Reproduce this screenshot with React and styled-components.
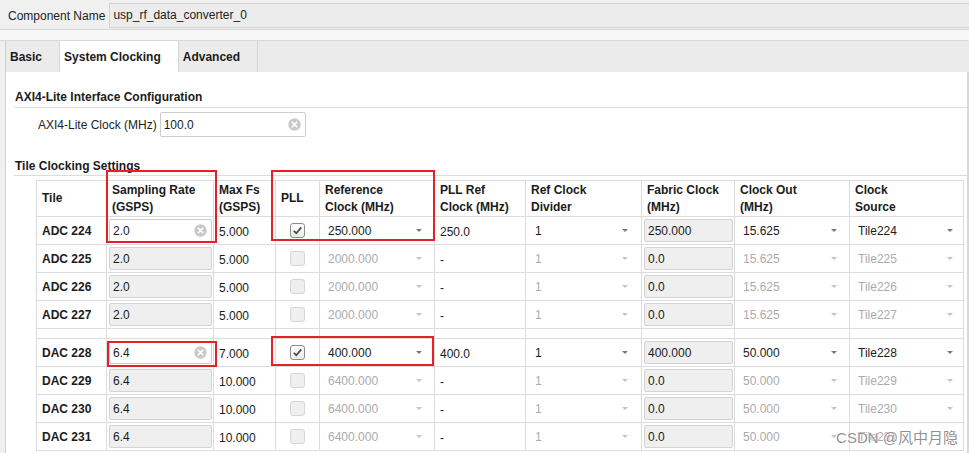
import React from 'react';
import styled, { createGlobalStyle } from 'styled-components';

const GlobalStyle = createGlobalStyle`
  body {
    margin: 0;
    background: #f0f0f0;
    font-family: "Liberation Sans", Arial, sans-serif;
    font-size: 12px;
    color: #1b1b1b;
  }
`;

const Page = styled.div`
  position: relative;
  width: 969px;
  height: 453px;
  overflow: hidden;
  background: #f0f0f0;
`;

const NameRow = styled.div`
  display: flex;
  align-items: center;
  box-sizing: border-box;
  height: 30px;
  padding-top: 3px;
  padding-bottom: 1px;
  border-bottom: 1px solid #d6d6d6;
`;

const NameLabel = styled.span`
  padding: 0 4px 0 8px;
  color: #222;
`;

const NameInput = styled.div`
  flex: 1;
  box-sizing: border-box;
  height: 25px;
  line-height: 23px;
  padding-left: 3px;
  background: #ececec;
  border: 1px solid #d2d2d2;
  border-right: none;
  color: #222;
`;

const Strip = styled.div`
  height: 10px;
  background: #f7f7f7;
  border-bottom: 1px solid #d8d8d8;
`;

const Panel = styled.div`
  margin-left: 5px;
  border-left: 1px solid #cfcfcf;
`;

const TabBar = styled.div`
  display: flex;
  height: 31px;
  background: #ebebeb;
`;

const Tab = styled.div`
  display: flex;
  align-items: center;
  padding: 0 17px 0 4px;
  font-weight: bold;
  color: #1b1b1b;
  border-right: 1px solid #d4d4d4;
  background: ${p => (p.$active ? '#ffffff' : 'transparent')};
`;

const Content = styled.div`
  height: 381px;
  background: #fff;
  border-right: 2px solid #d9d9d9;
  padding-left: 8px;
`;

const Heading = styled.div`
  padding: ${p => p.$top}px 0 ${p => p.$bottom}px 1px;
  line-height: 14px;
  font-weight: bold;
  color: #1b1b1b;
  border-bottom: 1px solid #dcdcdc;
`;

const FieldRow = styled.div`
  display: flex;
  align-items: center;
  margin-top: 4px;
  padding-left: 24px;
  gap: 3px;
`;

const FieldLabel = styled.span`
  color: #222;
`;

const TextBox = styled.div`
  display: flex;
  align-items: center;
  justify-content: space-between;
  box-sizing: border-box;
  width: ${p => p.$w}px;
  height: ${p => p.$h}px;
  padding: 0 4px 0 3px;
  border: 1px solid ${p => (p.$disabled ? '#d3d3d3' : '#cdcdcd')};
  border-radius: 2px;
  background: ${p => (p.$disabled ? '#efefef' : '#fff')};
  color: #1b1b1b;
`;

const Table = styled.table`
  margin: 4px 0 0 22px;
  border-collapse: collapse;
  table-layout: fixed;
  width: 927px;
`;

const Th = styled.th`
  height: 35px;
  padding: 0 5px;
  text-align: left;
  vertical-align: middle;
  font-weight: bold;
  line-height: 17px;
  color: #1b1b1b;
  border: 1px solid #dcdcdc;
`;

const Row = styled.tr`
  height: ${p => (p.$spacer ? 10 : 28)}px;
`;

const Td = styled.td`
  padding: 0 ${p => p.$pad ?? 5}px;
  vertical-align: middle;
  border: 1px solid #dcdcdc;
  color: #1b1b1b;
  font-weight: ${p => (p.$bold ? 'bold' : 'normal')};
`;

const Plain = styled.div`
  padding-top: 3px;
`;

const CheckBox = styled.div`
  display: flex;
  align-items: center;
  justify-content: center;
  box-sizing: border-box;
  width: 15px;
  height: 15px;
  margin: 0 auto;
  border-radius: 3px;
  border: 1px solid ${p => (p.$checked ? '#8c8c8c' : '#d6d6d6')};
  background: ${p => (p.$checked ? 'linear-gradient(#ffffff, #ececec)' : '#efefef')};
`;

const Select = styled.div`
  display: flex;
  align-items: center;
  justify-content: space-between;
  padding: 0 ${p => p.$right}px 0 ${p => p.$left}px;
  color: ${p => (p.$disabled ? '#ababab' : '#1b1b1b')};
`;

const Caret = styled.span`
  width: 0;
  height: 0;
  border-left: 3px solid transparent;
  border-right: 3px solid transparent;
  border-top: 3px solid ${p => (p.$disabled ? '#c4c4c4' : '#7a7a7a')};
`;

const Mark = styled.div`
  position: absolute;
  left: ${p => p.$x}px;
  top: ${p => p.$y}px;
  width: ${p => p.$w}px;
  height: ${p => p.$h}px;
  box-sizing: border-box;
  border: 2px solid #e5202b;
  pointer-events: none;
`;

const Watermark = styled.div`
  position: absolute;
  right: 11px;
  bottom: 6px;
  font-family: "Liberation Sans", "Noto Sans CJK SC", sans-serif;
  font-size: 15px;
  color: rgba(110, 110, 110, 0.75);
  text-shadow: 0 0 2px #fff, 0 0 1px #fff;
`;

const ClearIcon = () => (
  <svg width="13" height="13" viewBox="0 0 13 13">
    <circle cx="6.5" cy="6.5" r="6.2" fill="#c9c9c9" />
    <path d="M4.2 4.2 L8.8 8.8 M8.8 4.2 L4.2 8.8" stroke="#fff" strokeWidth="1.6" strokeLinecap="round" />
  </svg>
);

const CheckIcon = () => (
  <svg width="11" height="11" viewBox="0 0 11 11">
    <path d="M1.8 5.8 L4.3 8.2 L9.3 2.4" fill="none" stroke="#4a4a4a" strokeWidth="1.7" />
  </svg>
);

const tiles = [
  { name: 'ADC 224', rate: '2.0', max: '5.000', ref: '250.000', pllRef: '250.0', fabric: '250.000', out: '15.625', src: 'Tile224', on: true },
  { name: 'ADC 225', rate: '2.0', max: '5.000', ref: '2000.000', pllRef: '-', fabric: '0.0', out: '15.625', src: 'Tile225' },
  { name: 'ADC 226', rate: '2.0', max: '5.000', ref: '2000.000', pllRef: '-', fabric: '0.0', out: '15.625', src: 'Tile226' },
  { name: 'ADC 227', rate: '2.0', max: '5.000', ref: '2000.000', pllRef: '-', fabric: '0.0', out: '15.625', src: 'Tile227' },
  null,
  { name: 'DAC 228', rate: '6.4', max: '7.000', ref: '400.000', pllRef: '400.0', fabric: '400.000', out: '50.000', src: 'Tile228', on: true },
  { name: 'DAC 229', rate: '6.4', max: '10.000', ref: '6400.000', pllRef: '-', fabric: '0.0', out: '50.000', src: 'Tile229' },
  { name: 'DAC 230', rate: '6.4', max: '10.000', ref: '6400.000', pllRef: '-', fabric: '0.0', out: '50.000', src: 'Tile230' },
  { name: 'DAC 231', rate: '6.4', max: '10.000', ref: '6400.000', pllRef: '-', fabric: '0.0', out: '50.000', src: 'Tile231' },
];

const widths = [70, 107, 62, 44, 115, 91, 116, 93, 115, 114];

function TileRow({ t }) {
  if (!t) {
    return (
      <Row $spacer>
        {widths.map((w, i) => <Td key={i} />)}
      </Row>
    );
  }
  const off = !t.on;
  return (
    <Row>
      <Td $bold>{t.name}</Td>
      <Td $pad={2}>
        <TextBox $w={103} $h={23} $disabled={off}>
          {t.rate}
          {!off && <ClearIcon />}
        </TextBox>
      </Td>
      <Td><Plain>{t.max}</Plain></Td>
      <Td><CheckBox $checked={t.on}>{t.on && <CheckIcon />}</CheckBox></Td>
      <Td $pad={0}>
        <Select $left={8} $right={12} $disabled={off}>{t.ref}<Caret $disabled={off} /></Select>
      </Td>
      <Td><Plain>{t.pllRef}</Plain></Td>
      <Td $pad={0}>
        <Select $left={9} $right={13} $disabled={off}>1<Caret $disabled={off} /></Select>
      </Td>
      <Td $pad={2}>
        <TextBox $w={89} $h={23} $disabled>{t.fabric}</TextBox>
      </Td>
      <Td $pad={0}>
        <Select $left={8} $right={12} $disabled={off}>{t.out}<Caret $disabled={off} /></Select>
      </Td>
      <Td $pad={0}>
        <Select $left={8} $right={10} $disabled={off}>{t.src}<Caret $disabled={off} /></Select>
      </Td>
    </Row>
  );
}

export default function App() {
  return (
    <Page>
      <GlobalStyle />
      <NameRow>
        <NameLabel>Component Name</NameLabel>
        <NameInput>usp_rf_data_converter_0</NameInput>
      </NameRow>
      <Strip />
      <Panel>
        <TabBar>
          <Tab>Basic</Tab>
          <Tab $active>System Clocking</Tab>
          <Tab>Advanced</Tab>
        </TabBar>
        <Content>
          <Heading $top={18} $bottom={3}>AXI4-Lite Interface Configuration</Heading>
          <FieldRow>
            <FieldLabel>AXI4-Lite Clock (MHz)</FieldLabel>
            <TextBox $w={146} $h={25}>
              100.0
              <ClearIcon />
            </TextBox>
          </FieldRow>
          <Heading $top={22} $bottom={2}>Tile Clocking Settings</Heading>
          <Table>
            <colgroup>
              {widths.map((w, i) => <col key={i} style={{ width: w }} />)}
            </colgroup>
            <thead>
              <tr>
                <Th>Tile</Th>
                <Th>Sampling Rate<br />(GSPS)</Th>
                <Th>Max Fs<br />(GSPS)</Th>
                <Th>PLL</Th>
                <Th>Reference<br />Clock (MHz)</Th>
                <Th>PLL Ref<br />Clock (MHz)</Th>
                <Th>Ref Clock<br />Divider</Th>
                <Th>Fabric Clock<br />(MHz)</Th>
                <Th>Clock Out<br />(MHz)</Th>
                <Th>Clock<br />Source</Th>
              </tr>
            </thead>
            <tbody>
              {tiles.map((t, i) => <TileRow key={i} t={t} />)}
            </tbody>
          </Table>
        </Content>
      </Panel>
      <Mark $x={106} $y={170} $w={111} $h={73} />
      <Mark $x={271} $y={170} $w={164} $h={71} />
      <Mark $x={107} $y={341} $w={110} $h={26} />
      <Mark $x={271} $y={336} $w={163} $h={30} />
      <Watermark>CSDN @风中月隐</Watermark>
    </Page>
  );
}
